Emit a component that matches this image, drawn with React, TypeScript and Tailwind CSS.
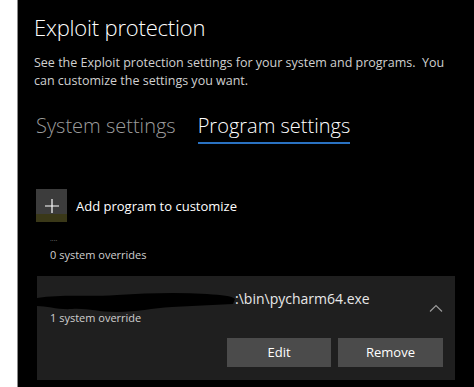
const Plus = () => (
  <svg width="16" height="16" viewBox="0 0 16 16" className="text-white">
    <path d="M8 1v14M1 8h14" stroke="currentColor" strokeWidth="1.2" fill="none" />
  </svg>
);

const ChevronUp = () => (
  <svg width="14" height="8" viewBox="0 0 14 8" className="text-[#9a9a9a]">
    <path d="M1 7.5L7 1.5l6 6" stroke="currentColor" strokeWidth="1.2" fill="none" />
  </svg>
);

// black marker scribble hiding the path
const Scribble = () => (
  <svg width="200" height="24" viewBox="0 0 200 24" className="absolute left-[-13px] top-[3px]">
    <path
      d="M0 8 C25 4 50 7 80 5 C110 3 140 2 170 4 C185 5 195 6 198 9 L196 14 C175 15 155 16 135 17 C115 18 100 22 80 22 C60 22 50 18 35 19 C22 20 10 16 0 16 Z"
      fill="#000"
    />
  </svg>
);

export default function App() {
  return (
    <div className="flex w-[474px] h-[387px] bg-white overflow-hidden font-['Open_Sans',sans-serif]">
      <div className="w-[18px] shrink-0 border-r border-[#8a8a8a]" />
      <div className="flex-1 bg-black pl-[16px] pr-[12px] pt-[12px] text-white">
        <h1 className="text-[22px] font-light leading-[30px] tracking-[-0.2px]">Exploit protection</h1>
        <p className="mt-[12px] text-[12.5px] leading-[18px] text-[#d0d0d0]">
          See the Exploit protection settings for your system and programs.&nbsp; You can customize the settings you want.
        </p>

        <div className="mt-[22px] flex gap-[22px] pl-[2px] text-[20px] font-light leading-[28px]">
          <span className="text-[#9c9c9c]">System settings</span>
          <div className="flex flex-col">
            <span className="text-white">Program settings</span>
            <div className="mt-[2px] h-[2px] bg-[#2a72c2]" />
          </div>
        </div>

        <div className="mt-[45px] flex items-center gap-[9px] pl-[2px]">
          <div className="relative flex h-[33px] w-[31px] items-center justify-center bg-[#3c3c3c]">
            <div className="absolute bottom-0 left-0 right-0 h-[8px] bg-[#3a3818]" />
            <Plus />
          </div>
          <span className="pt-[2px] text-[13px]">Add program to customize</span>
        </div>

        <div className="mt-[14px] pl-[16px] text-[11px] leading-[14px] text-[#cfcfcf]">
          <div className="text-[7px] leading-[6px] text-[#777]">....</div>
          <div className="mt-[6px]">0 system overrides</div>
        </div>

        <div className="mt-[14px] ml-[3px] mr-[7px] h-[104px] bg-[#1f1f1f] pl-[13px] pr-[12px] pt-[11px]">
          <div className="flex">
            <div className="relative flex-1">
              <div className="flex h-[22px] items-center pl-[185px] text-[14px] text-[#e8e8e8]">:\bin\pycharm64.exe</div>
              <Scribble />
              <div className="mt-[2px] text-[11px] leading-[14px] text-[#cfcfcf]">1 system override</div>
            </div>
            <div className="pt-[17px]">
              <ChevronUp />
            </div>
          </div>
          <div className="mt-[13px] flex justify-end gap-[7px]">
            <button className="h-[29px] w-[104px] bg-[#4b4b4b] text-[13px] text-white">Edit</button>
            <button className="h-[29px] w-[105px] bg-[#4b4b4b] text-[13px] text-white">Remove</button>
          </div>
        </div>
      </div>
    </div>
  );
}
